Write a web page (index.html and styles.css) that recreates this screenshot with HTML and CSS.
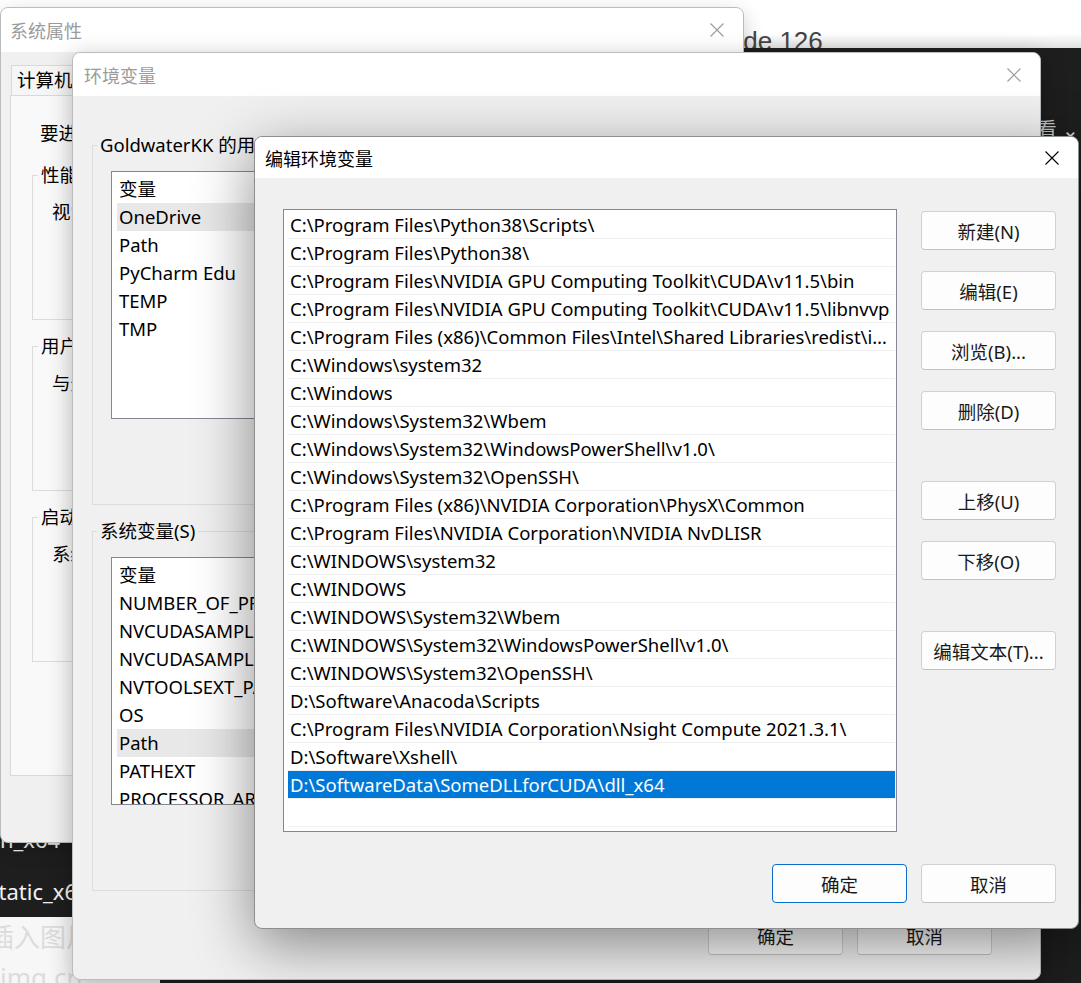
FILE: index.html
```html
<!DOCTYPE html>
<html lang="zh-CN">
<head>
  <meta charset="UTF-8" />
  <title>编辑环境变量</title>
  <link rel="stylesheet" href="styles.css">
</head>
<body>
  <!-- page behind the dialogs -->
  <div class="desktop">
    <div class="page-head">Code 126</div>
    <div class="page-code">
      <div class="code-top">查看 ⌄</div>
      <div class="code-lines">
        <div>n_x64</div>
        <div class="cut">static_x64</div>
      </div>
    </div>
    <div class="page-foot">
      <div class="cut">插入图片</div>
      <div>img.cn</div>
    </div>
  </div>

  <!-- 系统属性 -->
  <div class="win win-sys inactive">
    <div class="titlebar">
      <span class="title">系统属性</span>
      <span class="close"><svg width="16" height="16" viewBox="0 0 16 16"><path d="M1.5 1.5L14.5 14.5M14.5 1.5L1.5 14.5" stroke="currentColor" stroke-width="1.1" fill="none"/></svg></span>
    </div>
    <div class="sys-body">
      <div class="tabs">
        <div class="tab">计算机名</div>
        <div class="tab">硬件</div>
        <div class="tab">高级</div>
      </div>
      <div class="tab-page">
        <p class="note">要进行大多数更改，你必须作为管理员登录。</p>
        <fieldset class="group sys-group">
          <legend>性能</legend>
          <p>视觉效果，处理器计划，内存使用，以及虚拟内存</p>
        </fieldset>
        <fieldset class="group sys-group">
          <legend>用户配置文件</legend>
          <p>与登录帐户相关的桌面设置</p>
        </fieldset>
        <fieldset class="group sys-group">
          <legend>启动和故障恢复</legend>
          <p>系统启动、系统故障和调试信息</p>
        </fieldset>
      </div>
    </div>
  </div>

  <!-- 环境变量 -->
  <div class="win win-env inactive">
    <div class="titlebar">
      <span class="title">环境变量</span>
      <span class="close"><svg width="16" height="16" viewBox="0 0 16 16"><path d="M1.5 1.5L14.5 14.5M14.5 1.5L1.5 14.5" stroke="currentColor" stroke-width="1.1" fill="none"/></svg></span>
    </div>
    <div class="env-body">
      <fieldset class="group env-group">
        <legend>GoldwaterKK 的用户变量(U)</legend>
        <div class="listview">
          <div class="lv-row"><span>变量</span><span>值</span></div>
          <div class="lv-row selected"><span>OneDrive</span><span>C:\Users\GoldwaterKK\OneDrive</span></div>
          <div class="lv-row"><span>Path</span><span>C:\Users\GoldwaterKK\AppData\Local\Microsoft\WindowsApps;</span></div>
          <div class="lv-row"><span>PyCharm Edu</span><span>D:\Software\PyCharm Edu\bin;</span></div>
          <div class="lv-row"><span>TEMP</span><span>C:\Users\GoldwaterKK\AppData\Local\Temp</span></div>
          <div class="lv-row"><span>TMP</span><span>C:\Users\GoldwaterKK\AppData\Local\Temp</span></div>
        </div>
      </fieldset>
      <fieldset class="group env-group sys-vars">
        <legend>系统变量(S)</legend>
        <div class="listview">
          <div class="lv-row"><span>变量</span><span>值</span></div>
          <div class="lv-row"><span>NUMBER_OF_PROCESSORS</span><span>12</span></div>
          <div class="lv-row"><span>NVCUDASAMPLES_ROOT</span><span>C:\ProgramData\NVIDIA Corporation\CUDA Samples\v11.5</span></div>
          <div class="lv-row"><span>NVCUDASAMPLES11_5_ROOT</span><span>C:\ProgramData\NVIDIA Corporation\CUDA Samples\v11.5</span></div>
          <div class="lv-row"><span>NVTOOLSEXT_PATH</span><span>C:\Program Files\NVIDIA Corporation\NvToolsExt\</span></div>
          <div class="lv-row"><span>OS</span><span>Windows_NT</span></div>
          <div class="lv-row selected"><span>Path</span><span>C:\Program Files\Python38\Scripts\;C:\Program Files\Python38\</span></div>
          <div class="lv-row"><span>PATHEXT</span><span>.COM;.EXE;.BAT;.CMD;.VBS;.VBE;.JS;.JSE;.WSF;.WSH;.MSC</span></div>
          <div class="lv-row"><span>PROCESSOR_ARCHITECTURE</span><span>AMD64</span></div>
        </div>
      </fieldset>
      <div class="env-foot">
        <button class="btn">确定</button>
        <button class="btn">取消</button>
      </div>
    </div>
  </div>

  <!-- 编辑环境变量 -->
  <div class="win win-edit">
    <div class="titlebar">
      <span class="title">编辑环境变量</span>
      <span class="close"><svg width="16" height="16" viewBox="0 0 16 16"><path d="M1.5 1.5L14.5 14.5M14.5 1.5L1.5 14.5" stroke="currentColor" stroke-width="1.1" fill="none"/></svg></span>
    </div>
    <div class="edit-body">
      <div class="edit-main">
        <div class="path-list">
          <div class="path-row">C:\Program Files\Python38\Scripts\</div>
          <div class="path-row">C:\Program Files\Python38\</div>
          <div class="path-row">C:\Program Files\NVIDIA GPU Computing Toolkit\CUDA\v11.5\bin</div>
          <div class="path-row">C:\Program Files\NVIDIA GPU Computing Toolkit\CUDA\v11.5\libnvvp</div>
          <div class="path-row">C:\Program Files (x86)\Common Files\Intel\Shared Libraries\redist\intel64\compiler</div>
          <div class="path-row">C:\Windows\system32</div>
          <div class="path-row">C:\Windows</div>
          <div class="path-row">C:\Windows\System32\Wbem</div>
          <div class="path-row">C:\Windows\System32\WindowsPowerShell\v1.0\</div>
          <div class="path-row">C:\Windows\System32\OpenSSH\</div>
          <div class="path-row">C:\Program Files (x86)\NVIDIA Corporation\PhysX\Common</div>
          <div class="path-row">C:\Program Files\NVIDIA Corporation\NVIDIA NvDLISR</div>
          <div class="path-row">C:\WINDOWS\system32</div>
          <div class="path-row">C:\WINDOWS</div>
          <div class="path-row">C:\WINDOWS\System32\Wbem</div>
          <div class="path-row">C:\WINDOWS\System32\WindowsPowerShell\v1.0\</div>
          <div class="path-row">C:\WINDOWS\System32\OpenSSH\</div>
          <div class="path-row">D:\Software\Anacoda\Scripts</div>
          <div class="path-row">C:\Program Files\NVIDIA Corporation\Nsight Compute 2021.3.1\</div>
          <div class="path-row">D:\Software\Xshell\</div>
          <div class="path-row selected">D:\SoftwareData\SomeDLLforCUDA\dll_x64</div>
          <div class="path-row"></div>
        </div>
        <div class="edit-side">
          <button class="btn">新建(N)</button>
          <button class="btn">编辑(E)</button>
          <button class="btn">浏览(B)...</button>
          <button class="btn">删除(D)</button>
          <button class="btn gap-top">上移(U)</button>
          <button class="btn">下移(O)</button>
          <button class="btn gap-top">编辑文本(T)...</button>
        </div>
      </div>
      <div class="edit-foot">
        <button class="btn btn-default">确定</button>
        <button class="btn">取消</button>
      </div>
    </div>
  </div>
</body>
</html>
```

FILE: styles.css
```css
body {
  margin: 0;
  width: 1081px;
  height: 983px;
  overflow: hidden;
  position: relative;
  font-family: "Noto Sans", "Noto Sans CJK SC", sans-serif;
  font-size: 18.5px;
  color: #000;
  background: #1e1e1e;
}

p {
  margin: 0;
}

/* page behind */
.desktop {
  display: flex;
  flex-direction: column;
  height: 983px;
}

.page-head {
  flex: none;
  height: 48px;
  box-sizing: border-box;
  padding: 28px 0 0 710px;
  background: linear-gradient(#fff 70%, #e0e0e0);
  font-family: "Liberation Sans", sans-serif;
  font-size: 26px;
  line-height: 26px;
  color: #444;
  overflow: hidden;
}

.page-code {
  flex: none;
  height: 869px;
  display: flex;
  flex-direction: column;
  justify-content: space-between;
  color: #f2f2f2;
}

.code-top {
  text-align: right;
  padding: 68px 2px 0 0;
  font-size: 20px;
  line-height: 28px;
  color: #cfcfcf;
}

.code-lines {
  font-size: 22px;
  line-height: 52px;
}

.cut {
  margin-left: -12px;
}

.page-foot {
  flex: 1;
  min-height: 0;
  overflow: hidden;
  width: 160px;
  background: #f7f7f7;
  color: #dcdcdc;
  font-size: 26px;
  line-height: 40px;
}

/* windows */
.win {
  position: absolute;
  display: flex;
  flex-direction: column;
  box-sizing: border-box;
  background: #f0f0f0;
  border: 1px solid #bcbcbc;
  border-radius: 8px;
  overflow: hidden;
}

.win-sys {
  left: 0;
  top: 7px;
  width: 744px;
  height: 836px;
  z-index: 1;
  box-shadow: 0 6px 20px rgba(0, 0, 0, 0.2);
}

.win-env {
  left: 72px;
  top: 52px;
  width: 969px;
  height: 928px;
  z-index: 2;
  box-shadow: 0 6px 24px rgba(0, 0, 0, 0.28);
}

.win-edit {
  left: 254px;
  top: 136px;
  width: 825px;
  height: 793px;
  z-index: 3;
  border-color: #8e8e8e;
  box-shadow: 0 16px 60px rgba(0, 0, 0, 0.45);
}

.titlebar {
  display: flex;
  align-items: center;
  flex-shrink: 0;
  background: #fff;
}

.title {
  flex: 1;
  font-size: 18px;
}

.close {
  width: 52px;
  display: flex;
  justify-content: center;
}

.inactive .title,
.inactive .close {
  color: #9b9b9b;
}

.win-sys .titlebar {
  height: 44px;
  padding-left: 9px;
}

.win-env .titlebar {
  height: 43px;
  padding-left: 11px;
}

.win-edit .titlebar {
  height: 41px;
  padding-left: 10px;
}

/* group boxes */
.group {
  margin: 0;
  min-width: 0;
  border: 1px solid #dcdcdc;
}

.group legend {
  margin-left: -14px;
  padding: 0 3px;
  line-height: 24px;
}

/* 系统属性 */
.sys-body {
  flex: 1;
  padding: 13px 0 0 9px;
}

.tabs {
  display: flex;
  padding-left: 1px;
}

.tab {
  height: 30px;
  box-sizing: border-box;
  padding: 0 5px;
  line-height: 28px;
  border: 1px solid #d9d9d9;
  border-bottom: none;
  background: #f6f6f6;
}

.tab-page {
  height: 681px;
  box-sizing: border-box;
  margin-right: 10px;
  padding: 25px 21px 0 21px;
  border: 1px solid #d9d9d9;
  background: #f9f9f9;
}

.note {
  margin-left: 8px;
  line-height: 24px;
  margin-bottom: 18px;
}

.sys-group {
  padding: 13px 19px 95px;
  margin-bottom: 14px;
}

.sys-group p {
  line-height: 24px;
}

/* 环境变量 */
.env-body {
  flex: 1;
  display: flex;
  flex-direction: column;
  padding: 37px 19px 0;
}

.env-group {
  padding: 14px 18px 85px;
}

.sys-vars {
  margin-top: 14px;
}

.listview {
  height: 248px;
  box-sizing: border-box;
  padding: 3px 0 0 5px;
  border: 1px solid #828790;
  background: #fff;
  overflow: hidden;
}

.lv-row {
  display: flex;
  height: 28px;
  line-height: 28px;
  white-space: nowrap;
}

.lv-row span:first-child {
  width: 220px;
  padding-left: 2px;
  overflow: hidden;
}

.lv-row.selected {
  background: #e8e8e8;
}

.env-foot {
  display: flex;
  justify-content: flex-end;
  gap: 14px;
  margin: 26px 29px 0 0;
}

.env-foot .btn {
  height: 38px;
}

/* buttons */
.btn {
  width: 135px;
  height: 39px;
  box-sizing: border-box;
  padding: 0;
  border: 1px solid #d1d1d1;
  border-bottom-color: #c2c2c2;
  border-radius: 4px;
  background: #fdfdfd;
  font-family: inherit;
  font-size: 18.5px;
  color: #1a1a1a;
}

.btn-default {
  border-color: #0a6ccb;
}

/* 编辑环境变量 */
.edit-body {
  flex: 1;
  display: flex;
  flex-direction: column;
  padding: 31px 22px 25px 28px;
}

.edit-main {
  display: flex;
  gap: 24px;
}

.path-list {
  width: 614px;
  height: 623px;
  box-sizing: border-box;
  padding: 1px;
  border: 1px solid #828790;
  background: #fff;
  overflow: hidden;
}

.path-row {
  height: 28px;
  box-sizing: border-box;
  margin-left: 3px;
  padding-left: 2px;
  line-height: 27px;
  border-bottom: 1px solid #f0f0f0;
  white-space: nowrap;
  overflow: hidden;
  text-overflow: ellipsis;
}

.path-row.selected {
  background: #0078d7;
  color: #fff;
}

.edit-side {
  display: flex;
  flex-direction: column;
  gap: 21px;
  padding-top: 2px;
}

.gap-top {
  margin-top: 30px;
}

.edit-foot {
  display: flex;
  justify-content: flex-end;
  gap: 14px;
  margin-top: auto;
}
```
